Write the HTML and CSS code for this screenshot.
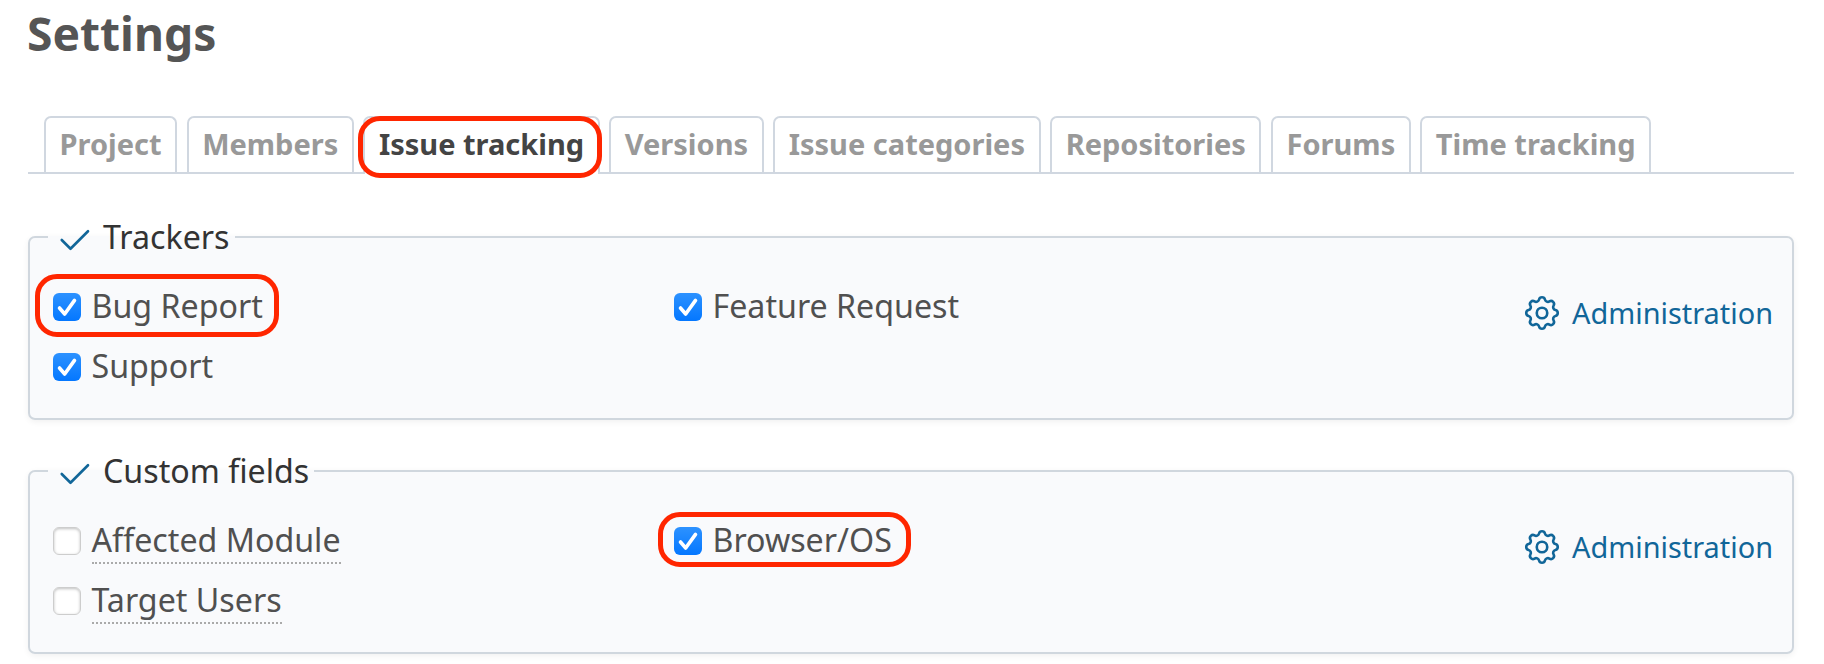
FILE: index.html
```html
<!DOCTYPE html>
<html lang="en">
<head>
    <meta charset="UTF-8">
    <meta name="viewport" content="width=device-width, initial-scale=1.0">
    <title>Settings</title>
    <link rel="stylesheet" href="styles.css">
</head>
<body>
    <svg class="sprite">
        <symbol id="icon-check" viewBox="0 0 24 24">
            <path d="M5 12l5 5l10 -10" />
        </symbol>
        <symbol id="icon-settings" viewBox="0 0 24 24">
            <path d="M10.325 4.317c.426 -1.756 2.924 -1.756 3.35 0a1.724 1.724 0 0 0 2.573 1.066c1.543 -.94 3.31 .826 2.37 2.37a1.724 1.724 0 0 0 1.065 2.572c1.756 .426 1.756 2.924 0 3.35a1.724 1.724 0 0 0 -1.066 2.573c.94 1.543 -.826 3.31 -2.37 2.37a1.724 1.724 0 0 0 -2.572 1.065c-.426 1.756 -2.924 1.756 -3.35 0a1.724 1.724 0 0 0 -2.573 -1.066c-1.543 .94 -3.31 -.826 -2.37 -2.37a1.724 1.724 0 0 0 -1.065 -2.572c-1.756 -.426 -1.756 -2.924 0 -3.35a1.724 1.724 0 0 0 1.066 -2.573c-.94 -1.543 .826 -3.31 2.37 -2.37c1 .608 2.296 .07 2.572 -1.065z" />
            <circle cx="12" cy="12" r="3" />
        </symbol>
        <symbol id="icon-tick" viewBox="0 0 28 28">
            <path d="M6.5 15l5.2 6l9.8 -13.6" />
        </symbol>
    </svg>

    <div id="content">
        <h2>Settings</h2>

        <ul class="tabs">
            <li><a>Project</a></li>
            <li><a>Members</a></li>
            <li class="selected"><a>Issue tracking</a><span class="mark mark-tab"></span></li>
            <li><a>Versions</a></li>
            <li><a>Issue categories</a></li>
            <li><a>Repositories</a></li>
            <li><a>Forums</a></li>
            <li><a>Time tracking</a></li>
        </ul>

        <fieldset class="box">
            <legend><svg class="icon"><use href="#icon-check" /></svg><span>Trackers</span></legend>
            <div class="box-body">
                <div class="options">
                    <label>
                        <span class="checkbox checked"><svg><use href="#icon-tick" /></svg></span>
                        <span class="name">Bug Report</span>
                        <span class="mark mark-bug"></span>
                    </label>
                    <label>
                        <span class="checkbox checked"><svg><use href="#icon-tick" /></svg></span>
                        <span class="name">Feature Request</span>
                    </label>
                    <label>
                        <span class="checkbox checked"><svg><use href="#icon-tick" /></svg></span>
                        <span class="name">Support</span>
                    </label>
                </div>
                <a class="admin-link"><svg class="icon"><use href="#icon-settings" /></svg><span>Administration</span></a>
            </div>
        </fieldset>

        <fieldset class="box">
            <legend><svg class="icon"><use href="#icon-check" /></svg><span>Custom fields</span></legend>
            <div class="box-body">
                <div class="options">
                    <label>
                        <span class="checkbox"></span>
                        <span class="name hint">Affected Module</span>
                    </label>
                    <label>
                        <span class="checkbox checked"><svg><use href="#icon-tick" /></svg></span>
                        <span class="name">Browser/OS</span>
                        <span class="mark mark-browser"></span>
                    </label>
                    <label>
                        <span class="checkbox"></span>
                        <span class="name hint">Target Users</span>
                    </label>
                </div>
                <a class="admin-link"><svg class="icon"><use href="#icon-settings" /></svg><span>Administration</span></a>
            </div>
        </fieldset>
    </div>
</body>
</html>
```
FILE: styles.css
```css
* {
    box-sizing: border-box;
}

body {
    font-family: "Noto Sans", sans-serif;
    font-size: 32.2px;
    margin: 0;
    color: #505050;
    background-color: #fff;
    overflow: hidden;
}

.sprite {
    display: none;
}

#content {
    padding: 2px 30px 0 28px;
}

h2 {
    margin: 0 0 50px -1px;
    font-size: 46.2px;
    line-height: 64px;
    color: #555;
}

/* Tabs */
.tabs {
    display: flex;
    gap: 9.6px;
    height: 58px;
    margin: 0 0 44px;
    padding: 0 0 0 16px;
    list-style: none;
    border-bottom: 2px solid #d0d7e0;
}

.tabs li {
    position: relative;
    height: 56px;
    padding: 0 13.52px;
    border: 2px solid #d0d7e0;
    border-bottom: none;
    border-radius: 7px 7px 0 0;
    font-size: 29px;
    font-weight: bold;
    line-height: 52px;
    white-space: nowrap;
    color: #999;
}

.tabs li.selected {
    height: 58px;
    background-color: #fff;
    color: #444;
}

/* Boxes */
.box {
    min-width: 0;
    height: 202px;
    margin: 0 0 32px;
    padding: 0 19px 0 23px;
    border: 2px solid #d0d7de;
    border-radius: 7px;
    background-color: #f9fafc;
    box-shadow: 0 2px 6px rgba(0, 0, 0, 0.06);
}

legend {
    display: flex;
    align-items: center;
    gap: 8px;
    height: 38px;
    margin-left: -5px;
    padding: 0 5px;
    line-height: 38px;
    color: #333;
}

.icon {
    flex: none;
    width: 42px;
    height: 42px;
    fill: none;
    stroke: #169;
    stroke-width: 1.5;
    stroke-linecap: round;
    stroke-linejoin: round;
}

legend .icon {
    margin-top: 6px;
}

.box-body {
    display: flex;
    align-items: flex-start;
    justify-content: space-between;
    padding-top: 27px;
}

.options {
    display: grid;
    grid-template-columns: 621px 621px;
    row-gap: 12px;
}

.options label {
    position: relative;
    display: flex;
    align-items: center;
    justify-self: start;
    gap: 10.5px;
    height: 48px;
}

.name {
    margin-top: -2px;
    line-height: 44px;
}

.hint {
    padding-top: 1px;
    border-bottom: 2px dotted #aaa;
}

.checkbox {
    width: 28px;
    height: 28px;
    border: 1px solid #cdcdcd;
    border-radius: 6px;
    background-color: #fff;
    box-shadow: inset 0 1px 3px rgba(0, 0, 0, 0.25);
}

.checkbox.checked {
    border: none;
    background: linear-gradient(#2d92ff, #0477ff);
    box-shadow: none;
}

.checkbox svg {
    display: block;
    width: 28px;
    height: 28px;
    fill: none;
    stroke: #fff;
    stroke-width: 3.6;
    stroke-linecap: round;
    stroke-linejoin: round;
}

.admin-link {
    display: flex;
    align-items: center;
    gap: 9px;
    margin-top: 9px;
    font-size: 28.9px;
    line-height: 42px;
    color: #169;
}

/* Red outlines drawn over the highlighted items */
.mark {
    position: absolute;
    border: 5px solid #ff2600;
    border-radius: 22px;
}

.mark-tab {
    top: -2px;
    left: -7.5px;
    width: 244px;
    height: 62px;
}

.mark-bug {
    top: -9px;
    left: -18px;
    width: 244px;
    height: 63px;
}

.mark-browser {
    top: -5px;
    left: -16px;
    width: 253px;
    height: 55px;
}
```
